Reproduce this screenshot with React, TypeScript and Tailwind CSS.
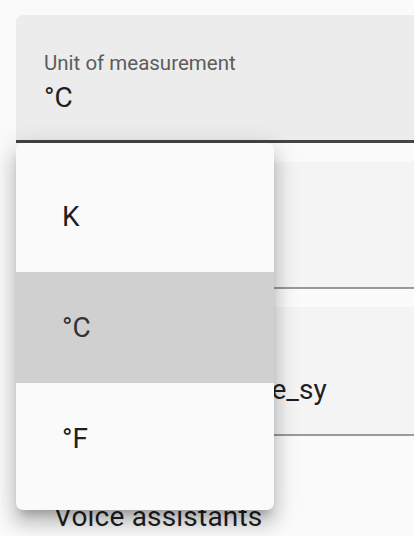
import React from "react";

export default function App() {
  return (
    <div
      className="relative w-[414px] h-[536px] overflow-hidden bg-[#fafafa] text-[#212121]"
      style={{ fontFamily: "Roboto, 'Liberation Sans', sans-serif" }}
    >
      <div className="flex flex-col pt-[15px] pl-4">
        {/* Field 1: focused select */}
        <div className="mr-[-16px] h-[128px] rounded-t-[7px] bg-[#ececec] flex flex-col">
          <div className="flex-1 pl-[28px] pt-[36px]">
            <div className="text-[20.5px] leading-[24px] text-[#5c5c5c]">Unit of measurement</div>
            <div className="mt-[6.5px] text-[28px] leading-[32px] text-[#1f1f1f]">°C</div>
          </div>
          <div className="h-[3.5px] bg-[#444444]" />
        </div>

        {/* Field 2 */}
        <div className="mt-[19px] mr-[-16px] h-[127px] rounded-t-[7px] bg-[#f4f4f4] flex flex-col">
          <div className="flex-1" />
          <div className="h-[2px] bg-[#9a9a9a]" />
        </div>

        {/* Field 3 */}
        <div className="mt-[18px] mr-[-16px] h-[129px] rounded-t-[7px] bg-[#f4f4f4] flex flex-col">
          <div className="flex-1 pl-[28px] pt-[36px]">
            <div className="text-[20.5px] leading-[24px] text-[#5c5c5c]">Entity ID</div>
            <div className="mt-[6.5px] text-[28px] leading-[32px] text-[#1f1f1f] whitespace-nowrap">
              sensor.temperature_sy
            </div>
          </div>
          <div className="h-[2px] bg-[#9a9a9a]" />
        </div>

        <div className="mt-[65px] pl-[38px] text-[28px] leading-[32px] tracking-[0.2px] text-[#1f1f1f] whitespace-nowrap">
          Voice assistants
        </div>
      </div>

      {/* Dropdown menu */}
      <div className="absolute left-4 top-[143px] w-[258px] rounded-[7px] bg-[#fafafa] pt-[18px] pb-[16px] shadow-[0_9px_9px_-5px_rgba(0,0,0,0.2),0_14px_17px_2px_rgba(0,0,0,0.14),0_5px_24px_4px_rgba(0,0,0,0.12)]">
        <div className="h-[111px] flex items-center pl-[46px] text-[28px] leading-[32px] text-[#1f1f1f]">K</div>
        <div className="h-[111px] flex items-center pl-[46px] text-[28px] leading-[32px] text-[#333333] bg-[#d0d0d0]">°C</div>
        <div className="h-[111px] flex items-center pl-[46px] text-[28px] leading-[32px] text-[#1f1f1f]">°F</div>
      </div>
    </div>
  );
}
